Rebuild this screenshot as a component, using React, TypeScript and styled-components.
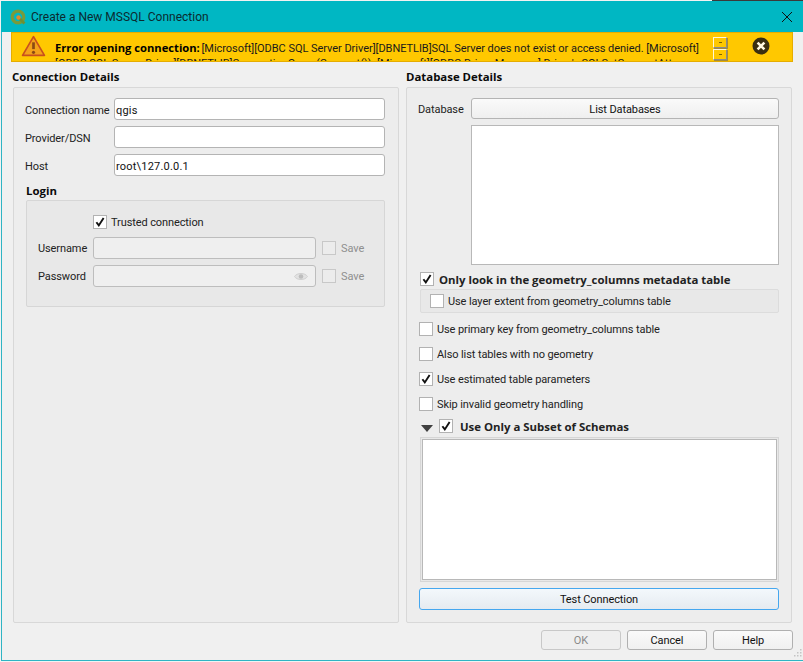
import React from 'react';
import styled, { createGlobalStyle } from 'styled-components';

const GlobalStyle = createGlobalStyle`
  html, body {
    margin: 0;
    padding: 0;
    background: #f1f1f1;
    font-family: Roboto, "Liberation Sans", sans-serif;
    font-size: 11px;
    letter-spacing: -0.1px;
    color: #111;
  }
`;

const boldFont = `font-family: "Open Sans", "Liberation Sans", sans-serif; font-size: 11.4px; font-weight: 700; letter-spacing: 0;`;

const Desktop = styled.div`
  width: 803px;
  height: 662px;
  overflow: hidden;
  padding: 1px 0 0 1px;
  box-sizing: border-box;
  background: linear-gradient(to right, #f2f2f2 712px, #3a3a3a 712px) top / 100% 1px no-repeat, #f2f2f2;
`;

const Window = styled.div`
  width: 802px;
  height: 660px;
  box-sizing: border-box;
  border-left: 1px solid #2fb4c4;
  border-bottom: 1px solid #2fb4c4;
  background: #f0f0f0;
  display: flex;
  flex-direction: column;
  position: relative;
`;

const TitleBar = styled.div`
  height: 31px;
  flex: none;
  margin-left: -1px;
  background: #00b7c3;
  display: flex;
  align-items: center;
  padding: 0 10px 0 9px;
  gap: 5px;
  font-size: 12px;
  letter-spacing: 0;
  color: #0b2a30;
`;

const TitleText = styled.span`
  flex: 1;
`;

const MessageBar = styled.div`
  height: 30px;
  flex: none;
  margin: 0 10px 0 9px;
  box-sizing: border-box;
  background: #ffc800;
  border: 1px solid #e6ad00;
  display: flex;
  align-items: flex-start;
  overflow: hidden;
`;

const WarnIcon = styled.svg`
  width: 25px;
  height: 25px;
  flex: none;
  margin: 1px 9px 0 9px;
`;

const MessageText = styled.div`
  width: 646px;
  flex: none;
  height: 28px;
  overflow: hidden;
  white-space: nowrap;
  line-height: 15px;
  padding-top: 7px;
  box-sizing: border-box;
  color: #1a1a1a;
  letter-spacing: -0.04px;
  b {
    ${boldFont}
    font-size: 11.2px;
    color: #000;
    margin-right: -1px;
  }
`;

const Pager = styled.div`
  display: flex;
  flex-direction: column;
  gap: 1px;
  margin: 4px 0 0 12px;
`;

const PagerButton = styled.div`
  width: 14px;
  height: 11px;
  box-sizing: border-box;
  border: 1px solid;
  border-color: #fff8d8 #8a8a8a #8a8a8a #fff8d8;
  box-shadow: 1px 1px 0 #a08a40;
  display: flex;
  align-items: center;
  justify-content: center;
`;

const PagerDot = styled.span`
  width: 3px;
  height: 1px;
  background: #7a6200;
`;

const DismissIcon = styled.svg`
  width: 18px;
  height: 18px;
  flex: none;
  margin: 4px 0 0 25px;
`;

const Columns = styled.div`
  display: grid;
  grid-template-columns: 386px 386px;
  column-gap: 7px;
  padding: 7px 0 0 11px;
`;

const Column = styled.section`
  display: flex;
  flex-direction: column;
`;

const GroupTitle = styled.div<{ $inset?: number }>`
  ${boldFont}
  line-height: 16px;
  height: 16px;
  margin-left: ${p => p.$inset ?? 0}px;
  color: #0a0a0a;
`;

const GroupBox = styled.div`
  margin-top: 2px;
  height: 536px;
  box-sizing: border-box;
  background: #ededed;
  border: 1px solid #d8d8d8;
  border-radius: 2px;
`;

const LeftBody = styled.div`
  padding: 10px 13px 0 11px;
`;

const FormGrid = styled.div`
  display: grid;
  grid-template-columns: 89px 271px;
  row-gap: 6px;
  align-items: center;
`;

const Label = styled.label`
  color: #222;
  white-space: nowrap;
  padding-top: 2px;
`;

const TextBox = styled.div<{ $disabled?: boolean }>`
  height: 22px;
  box-sizing: border-box;
  background: ${p => (p.$disabled ? '#efefef' : '#fff')};
  border: 1px solid ${p => (p.$disabled ? '#bdbdbd' : '#b4b4b4')};
  border-radius: 3px;
  display: flex;
  align-items: center;
  padding: 2px 1px 0;
  color: #111;
  letter-spacing: 0.2px;
  position: relative;
`;

const LoginTitle = styled(GroupTitle)`
  margin-top: 7px;
`;

const LoginBox = styled.div`
  margin: 1px 0 0 1px;
  width: 359px;
  height: 107px;
  box-sizing: border-box;
  background: #e8e8e8;
  border: 1px solid #d6d6d6;
  border-radius: 2px;
  padding: 14px 0 0 66px;
`;

const LoginRow = styled.div`
  display: flex;
  align-items: center;
  height: 22px;
  margin-top: 6px;
  position: relative;
`;

const LoginLabel = styled(Label)`
  position: absolute;
  left: -55px;
  padding-top: 0;
`;

const LoginField = styled.div`
  width: 223px;
  margin-right: 6px;
`;

const EyeIcon = styled.svg`
  position: absolute;
  right: 7px;
  top: 5px;
  width: 14px;
  height: 11px;
`;

const Box = styled.span<{ $disabled?: boolean }>`
  width: 14px;
  height: 14px;
  flex: none;
  box-sizing: border-box;
  background: ${p => (p.$disabled ? '#ececec' : '#fff')};
  border: 1px solid ${p => (p.$disabled ? '#c8c8c8' : '#b2b2b2')};
  display: flex;
  align-items: center;
  justify-content: center;
`;

const CheckRow = styled.div<{ $gap?: number; $bold?: boolean; $muted?: boolean }>`
  display: flex;
  align-items: center;
  gap: ${p => p.$gap ?? 4}px;
  height: 14px;
  white-space: nowrap;
  ${p => (p.$bold ? boldFont : '')}
  color: ${p => (p.$muted ? '#8f8f8f' : '#222')};
`;

const TrustedRow = styled(CheckRow)`
  margin-bottom: 8px;
`;

const Mark = () => (
  <svg width="10" height="10" viewBox="0 0 10 10">
    <path d="M1.4 5.2 L3.8 8.4 L8.6 1" fill="none" stroke="#111" strokeWidth="1.9" />
  </svg>
);

const Check = ({ on, disabled }: { on?: boolean; disabled?: boolean }) => (
  <Box $disabled={disabled}>{on && <Mark />}</Box>
);

const RightBody = styled.div`
  padding: 10px 12px 0 12px;
  display: flex;
  flex-direction: column;
`;

const DatabaseRow = styled.div`
  display: grid;
  grid-template-columns: 53px 308px;
  row-gap: 6px;
  align-items: center;
  margin-left: -1px;
`;

const PushButton = styled.button<{ $focus?: boolean }>`
  height: 21px;
  padding: ${p => (p.$focus ? '0' : '1px 0 0')};
  font: inherit;
  letter-spacing: inherit;
  color: #111;
  border: 1px solid ${p => (p.$focus ? '#45a7ef' : '#b4b4b4')};
  border-radius: 3px;
  background: ${p => (p.$focus ? 'linear-gradient(#f3f8fc, #e6ebf0)' : 'linear-gradient(#fafafa, #efefef)')};
`;

const ListBox = styled.div`
  grid-column: 2;
  height: 140px;
  background: #fff;
  border: 1px solid #b8b8b8;
  box-sizing: border-box;
`;

const IndentedCheck = styled(CheckRow)`
  margin: 7px 0 0 1px;
`;

const SubOption = styled.div`
  margin: 3px 0 0 1px;
  width: 359px;
  height: 24px;
  box-sizing: border-box;
  background: #e8e8e8;
  border: 1px solid #dcdcdc;
  border-radius: 2px;
  padding-left: 9px;
  display: flex;
  align-items: center;
`;

const OptionList = styled.div`
  display: flex;
  flex-direction: column;
  gap: 11px;
  margin-top: 9px;
`;

const SchemaHeader = styled.div`
  display: flex;
  align-items: center;
  gap: 6px;
  margin: 8px 0 0 2px;
  height: 14px;
`;

const Triangle = styled.span`
  width: 0;
  height: 0;
  margin-top: 5px;
  border-left: 6px solid transparent;
  border-right: 6px solid transparent;
  border-top: 7px solid #404040;
`;

const SchemaBox = styled.div`
  margin: 4px 0 0 1px;
  width: 359px;
  height: 145px;
  box-sizing: border-box;
  background: #e8e8e8;
  border: 1px solid #d6d6d6;
  padding: 1px;
`;

const SchemaList = styled.div`
  height: 141px;
  box-sizing: border-box;
  background: #fff;
  border: 1px solid #b8b8b8;
`;

const TestButton = styled(PushButton)`
  margin-top: 6px;
  width: 360px;
  height: 22px;
`;

const Footer = styled.div`
  display: flex;
  justify-content: flex-end;
  gap: 6px;
  margin-top: 7px;
  padding-right: 10px;
`;

const DialogButton = styled.button<{ $disabled?: boolean }>`
  width: 80px;
  height: 20px;
  padding: 0;
  font: inherit;
  letter-spacing: inherit;
  color: ${p => (p.$disabled ? '#8a8a8a' : '#111')};
  background: ${p => (p.$disabled ? '#efefef' : 'linear-gradient(#fafafa, #f0f0f0)')};
  border: 1px solid ${p => (p.$disabled ? '#c8c8c8' : '#b0b0b0')};
  border-radius: 3px;
`;

const SizeGrip = styled.svg`
  position: absolute;
  right: 1px;
  bottom: 1px;
  width: 11px;
  height: 11px;
`;

const CloseIcon = styled.svg`
  width: 12px;
  height: 12px;
`;

export default function App() {
  return (
    <Desktop>
      <GlobalStyle />
      <Window>
        <TitleBar>
          <svg width="16" height="16" viewBox="0 0 16 16">
            <circle cx="8" cy="8" r="5.8" fill="none" stroke="#7a9a3a" strokeWidth="3.2" />
            <path d="M9 9 L14.5 14.5" stroke="#6f8f34" strokeWidth="2.8" />
            <circle cx="8.5" cy="8.5" r="2.2" fill="#e08a2c" />
          </svg>
          <TitleText>Create a New MSSQL Connection</TitleText>
          <CloseIcon viewBox="0 0 12 12">
            <path d="M1 1 L11 11 M11 1 L1 11" stroke="#111" strokeWidth="1" />
          </CloseIcon>
        </TitleBar>
        <MessageBar>
          <WarnIcon viewBox="0 0 24 24">
            <path d="M12 2.5 L22.5 20.5 H1.5 Z" fill="#f4a21a" stroke="#c8501e" strokeWidth="1.6" strokeLinejoin="round" />
            <path d="M12 8 V14.5" stroke="#8a4a14" strokeWidth="2.6" />
            <circle cx="12" cy="17.6" r="1.5" fill="#8a4a14" />
          </WarnIcon>
          <MessageText>
            <b>Error opening connection:</b> [Microsoft][ODBC SQL Server Driver][DBNETLIB]SQL Server does not exist or access denied. [Microsoft]
            <br />
            [ODBC SQL Server Driver][DBNETLIB]ConnectionOpen (Connect()). [Microsoft][ODBC Driver Manager] Driver's SQLSetConnectAttr
          </MessageText>
          <Pager>
            <PagerButton><PagerDot /></PagerButton>
            <PagerButton><PagerDot /></PagerButton>
          </Pager>
          <DismissIcon viewBox="0 0 18 18">
            <circle cx="9" cy="9" r="8.5" fill="#3a2f10" />
            <path d="M5.6 5.6 L12.4 12.4 M12.4 5.6 L5.6 12.4" stroke="#fff8e0" strokeWidth="2.6" />
          </DismissIcon>
        </MessageBar>
        <Columns>
          <Column>
            <GroupTitle $inset={-1}>Connection Details</GroupTitle>
            <GroupBox>
              <LeftBody>
                <FormGrid>
                  <Label>Connection name</Label>
                  <TextBox>qgis</TextBox>
                  <Label>Provider/DSN</Label>
                  <TextBox />
                  <Label>Host</Label>
                  <TextBox>root\127.0.0.1</TextBox>
                </FormGrid>
                <LoginTitle $inset={1}>Login</LoginTitle>
                <LoginBox>
                  <TrustedRow>
                    <Check on />
                    Trusted connection
                  </TrustedRow>
                  <LoginRow>
                    <LoginLabel>Username</LoginLabel>
                    <LoginField>
                      <TextBox $disabled />
                    </LoginField>
                    <CheckRow $muted $gap={5}>
                      <Check disabled />
                      Save
                    </CheckRow>
                  </LoginRow>
                  <LoginRow>
                    <LoginLabel>Password</LoginLabel>
                    <LoginField>
                      <TextBox $disabled>
                        <EyeIcon viewBox="0 0 14 11">
                          <path d="M0.5 5.5 C3 1.5 11 1.5 13.5 5.5 C11 9.5 3 9.5 0.5 5.5 Z" fill="#e2e2e2" stroke="#cfcfcf" />
                          <circle cx="7" cy="5.5" r="2.3" fill="#bdbdbd" />
                        </EyeIcon>
                      </TextBox>
                    </LoginField>
                    <CheckRow $muted $gap={5}>
                      <Check disabled />
                      Save
                    </CheckRow>
                  </LoginRow>
                </LoginBox>
              </LeftBody>
            </GroupBox>
          </Column>
          <Column>
            <GroupTitle>Database Details</GroupTitle>
            <GroupBox>
              <RightBody>
                <DatabaseRow>
                  <Label>Database</Label>
                  <PushButton>List Databases</PushButton>
                  <ListBox />
                </DatabaseRow>
                <IndentedCheck $bold $gap={5}>
                  <Check on />
                  Only look in the geometry_columns metadata table
                </IndentedCheck>
                <SubOption>
                  <CheckRow>
                    <Check />
                    Use layer extent from geometry_columns table
                  </CheckRow>
                </SubOption>
                <OptionList>
                  <CheckRow>
                    <Check />
                    Use primary key from geometry_columns table
                  </CheckRow>
                  <CheckRow>
                    <Check />
                    Also list tables with no geometry
                  </CheckRow>
                  <CheckRow>
                    <Check on />
                    Use estimated table parameters
                  </CheckRow>
                  <CheckRow>
                    <Check />
                    Skip invalid geometry handling
                  </CheckRow>
                </OptionList>
                <SchemaHeader>
                  <Triangle />
                  <CheckRow $bold $gap={7}>
                    <Check on />
                    Use Only a Subset of Schemas
                  </CheckRow>
                </SchemaHeader>
                <SchemaBox>
                  <SchemaList />
                </SchemaBox>
                <TestButton $focus>Test Connection</TestButton>
              </RightBody>
            </GroupBox>
          </Column>
        </Columns>
        <Footer>
          <DialogButton $disabled>OK</DialogButton>
          <DialogButton>Cancel</DialogButton>
          <DialogButton>Help</DialogButton>
        </Footer>
        <SizeGrip viewBox="0 0 11 11">
          <path d="M9 1h1.5v1.5H9z M6 4h1.5v1.5H6z M9 4h1.5v1.5H9z M3 7h1.5v1.5H3z M6 7h1.5v1.5H6z M9 7h1.5v1.5H9z" fill="#c4c4c4" />
        </SizeGrip>
      </Window>
    </Desktop>
  );
}
